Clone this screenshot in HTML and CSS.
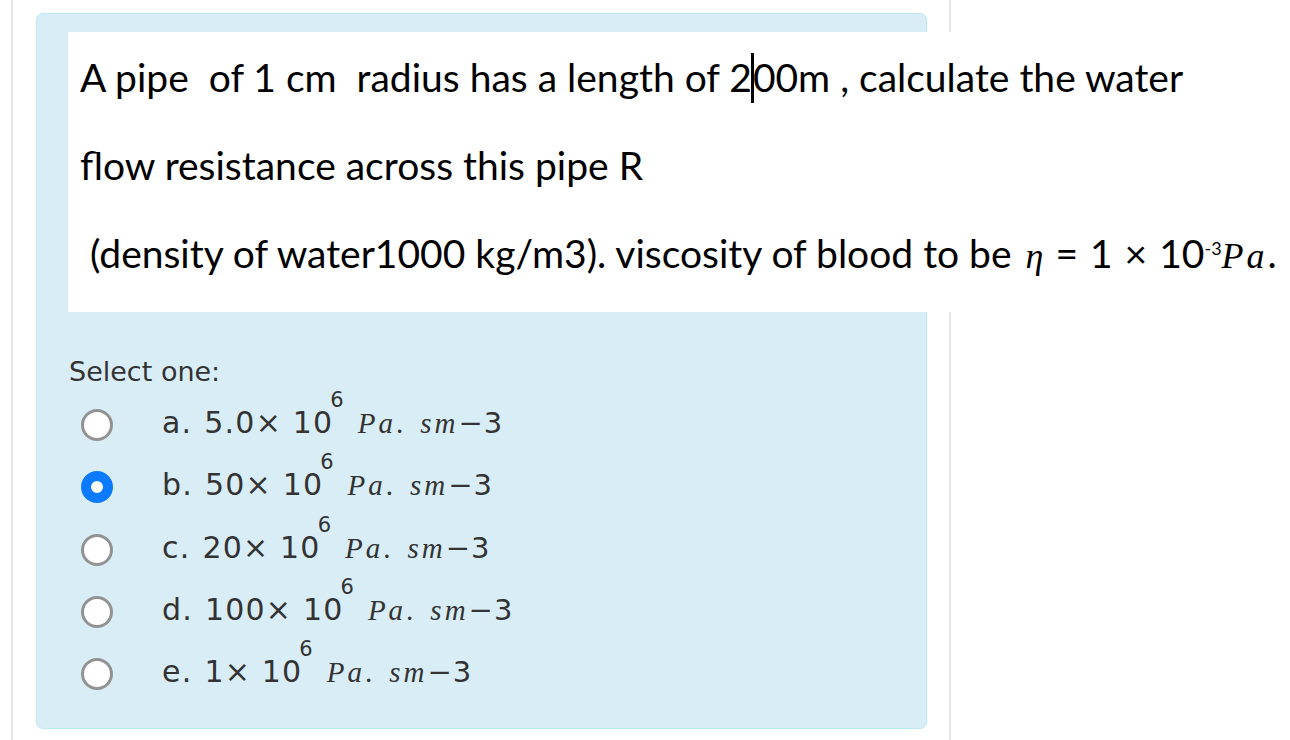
FILE: index.html
```
<!DOCTYPE html>
<html lang="en">
  <head>
    <meta charset="UTF-8" />
    <meta name="viewport" content="width=device-width, initial-scale=1.0" />
    <title>Question</title>
    <link rel="stylesheet" href="styles.css">
  </head>
  <body>
    <div class="region">
      <div class="que">
        <div class="qtext">
          <div class="qline">A pipe  of 1 cm  radius has a length of 2<span class="caret"></span>00m , calculate the water</div>
          <div class="qline">flow resistance across this pipe R</div>
          <div class="qline"> (density of water1000 kg/m3). viscosity of blood to be <span class="eq"><i class="mi">η</i> = 1 × 10<sup class="exp">-3</sup><i class="mi pa">Pa</i>.</span></div>
        </div>

        <div class="prompt">Select one:</div>

        <div class="answer">
          <label class="opt">
            <span class="radio"></span>
            <span class="opt-text"><span class="num">a.</span>5.0× 10<sup class="pow">6</sup><span class="unit"><i>Pa</i>.<i class="sm">sm</i><span class="tail">−3</span></span></span>
          </label>
          <label class="opt">
            <span class="radio checked"></span>
            <span class="opt-text"><span class="num">b.</span>50× 10<sup class="pow">6</sup><span class="unit"><i>Pa</i>.<i class="sm">sm</i><span class="tail">−3</span></span></span>
          </label>
          <label class="opt">
            <span class="radio"></span>
            <span class="opt-text"><span class="num">c.</span>20× 10<sup class="pow">6</sup><span class="unit"><i>Pa</i>.<i class="sm">sm</i><span class="tail">−3</span></span></span>
          </label>
          <label class="opt">
            <span class="radio"></span>
            <span class="opt-text"><span class="num">d.</span>100× 10<sup class="pow">6</sup><span class="unit"><i>Pa</i>.<i class="sm">sm</i><span class="tail">−3</span></span></span>
          </label>
          <label class="opt">
            <span class="radio"></span>
            <span class="opt-text"><span class="num">e.</span>1× 10<sup class="pow">6</sup><span class="unit"><i>Pa</i>.<i class="sm">sm</i><span class="tail">−3</span></span></span>
          </label>
        </div>
      </div>
    </div>
  </body>
</html>
```

FILE: styles.css
```
:root {
  --card-bg: #d9edf7;
  --card-border: #bce8f1;
  --rule: #e6e6e6;
  --text: #333;
  --radio-blue: #0a7aff;
}

body {
  margin: 0;
  background: #fff;
  height: 740px;
  overflow: hidden;
}

/* main column, ruled on both sides */
.region {
  margin-left: 11px;
  width: 940px;
  height: 740px;
  box-sizing: border-box;
  border-left: 2px solid var(--rule);
  border-right: 2px solid var(--rule);
  padding: 13px 22px 0 23px;
}

.que {
  height: 716px;
  box-sizing: border-box;
  background: var(--card-bg);
  border: 1px solid var(--card-border);
  border-radius: 7px;
  padding: 18px 0 0 31px;
}

/* the question text is a pasted picture, wider than the card */
.qtext {
  width: 1222px;
  height: 280px;
  box-sizing: border-box;
  background: #fff;
  padding: 1px 12px 0;
  font-family: Lato, "Open Sans", sans-serif;
  font-size: 39px;
  color: #000;
}

.qline {
  line-height: 88px;
  white-space: pre;
}

.caret {
  display: inline-block;
  width: 3px;
  height: 50px;
  background: #000;
  vertical-align: -11px;
  margin: 0 -1px;
}

.eq {
  word-spacing: 2px;
}

.mi {
  font-family: "Liberation Serif", serif;
  font-size: 36px;
}

.eq .mi:first-child {
  margin-left: 4px;
}

.pa {
  letter-spacing: 3px;
}

.exp {
  font-size: 18px;
  vertical-align: 13px;
  line-height: 0;
}

.prompt {
  margin-top: 45px;
  font-family: "DejaVu Sans", Verdana, sans-serif;
  font-size: 27px;
  line-height: 30px;
  color: var(--text);
  padding-left: 1px;
}

.answer {
  margin-top: 7px;
  padding-left: 13px;
}

.opt {
  display: flex;
  align-items: center;
  height: 62.25px;
}

.radio {
  width: 32px;
  height: 32px;
  box-sizing: border-box;
  border-radius: 50%;
  border: 3px solid #929292;
  background: #fff;
  flex-shrink: 0;
}

.radio.checked {
  border: 10px solid var(--radio-blue);
}

.opt-text {
  margin-left: 49px;
  margin-bottom: 4px;
  font-family: "DejaVu Sans", Verdana, sans-serif;
  font-size: 30px;
  line-height: 62px;
  letter-spacing: 1.2px;
  color: var(--text);
  white-space: nowrap;
}

.num {
  margin-right: 12px;
}

.pow {
  font-size: 21px;
  line-height: 0;
  letter-spacing: 0;
  vertical-align: 26px;
  margin-left: -3px;
}

.unit {
  margin-left: 14px;
  font-family: "Liberation Serif", serif;
  font-size: 29px;
  letter-spacing: 3px;
}

.sm {
  margin-left: 14px;
}

.tail {
  font-family: "DejaVu Sans", Verdana, sans-serif;
  font-size: 29px;
  letter-spacing: 1px;
}
```
